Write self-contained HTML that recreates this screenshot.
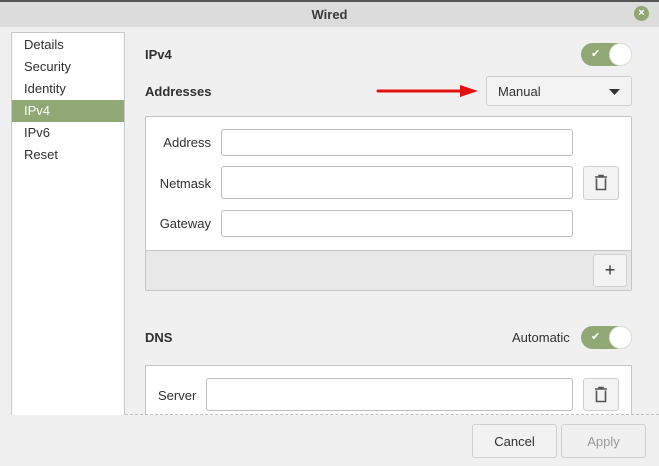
<!DOCTYPE html>
<html><head><meta charset="utf-8"><style>
*{box-sizing:border-box;margin:0;padding:0}
body{width:659px;height:466px;overflow:hidden;background:#f0f0f0;font-family:"Liberation Sans","DejaVu Sans",sans-serif;font-size:13px;color:#303030;position:relative}
.a{position:absolute}
.title{left:0;top:0;width:659px;height:27px;background:#dcdcdc;border-top:2px solid #555;text-align:center;line-height:26px;font-weight:bold;color:#3a3a3a}
.list{left:11px;top:32px;width:114px;height:384px;background:#fff;border:1px solid #c8c8c8;border-bottom:none;padding-top:1px}
.list div{height:22px;line-height:22px;padding-left:12px}
.list .sel{background:#8fa876;color:#fff}
.b{font-weight:bold}
.tog{width:51px;height:23px;border-radius:12px;background:#8fa876}
.tog .k{position:absolute;right:0px;top:0px;width:23px;height:23px;border-radius:50%;background:#fff;border:1px solid #dfe6d6}
.tog .c{position:absolute;left:10px;top:4px;color:#fff;font-size:11px}
.inp{background:#fff;border:1px solid #bdbdbd;border-radius:3px}
.btn{background:#f3f3f3;border:1px solid #cfcfcf;border-radius:3px;text-align:center}
.lbl{text-align:right;width:70px}
</style></head><body>
<div class="a title">Wired</div>
<div class="a" style="left:634px;top:6px;width:15px;height:15px;border-radius:50%;background:#8fa876;color:#fff;font-size:11px;line-height:15px;text-align:center;font-weight:bold">×</div>
<div class="a list"><div>Details</div><div>Security</div><div>Identity</div><div class="sel">IPv4</div><div>IPv6</div><div>Reset</div></div>
<div class="a b" style="left:145px;top:47px">IPv4</div>
<div class="a tog" style="left:581px;top:43px"><span class="c">✔</span><span class="k"></span></div>
<div class="a b" style="left:145px;top:84px">Addresses</div>
<svg class="a" style="left:376px;top:83px" width="104" height="16"><line x1="2" y1="8" x2="86" y2="8" stroke="#e31010" stroke-width="3" stroke-linecap="round"/><polygon points="84,2 102,8 84,14" fill="#e31010"/></svg>
<div class="a btn" style="left:486px;top:76px;width:146px;height:30px;text-align:left;padding-left:11px;line-height:29px">Manual<svg class="a" style="right:11px;top:12px" width="11" height="6"><polygon points="0,0 11,0 5.5,6" fill="#333"/></svg></div>
<div class="a" style="left:145px;top:116px;width:487px;height:175px;background:#fff;border:1px solid #c4c4c4;border-radius:2px;overflow:hidden">
 <div class="a" style="left:0;top:133px;width:487px;height:42px;background:#e8e8e8;border-top:1px solid #c4c4c4"></div>
</div>
<div class="a lbl" style="left:141px;top:135px">Address</div>
<div class="a inp" style="left:221px;top:129px;width:352px;height:27px"></div>
<div class="a lbl" style="left:141px;top:176px">Netmask</div>
<div class="a inp" style="left:221px;top:166px;width:352px;height:33px"></div>
<div class="a lbl" style="left:141px;top:216px">Gateway</div>
<div class="a inp" style="left:221px;top:210px;width:352px;height:27px"></div>
<div class="a btn" style="left:583px;top:166px;width:36px;height:34px"><svg width="34" height="32"><path d="M11 10h12M15 10V8.5h4V10M12.5 11.5v11h9v-11" fill="none" stroke="#555" stroke-width="1.6"/></svg></div>
<div class="a btn" style="left:593px;top:254px;width:34px;height:33px;font-size:18px;line-height:30px;color:#333">+</div>
<div class="a b" style="left:145px;top:330px">DNS</div>
<div class="a" style="left:512px;top:330px">Automatic</div>
<div class="a tog" style="left:581px;top:326px"><span class="c">✔</span><span class="k"></span></div>
<div class="a" style="left:145px;top:365px;width:487px;height:51px;background:#fff;border:1px solid #c4c4c4;border-bottom:none"></div>
<div class="a" style="left:158px;top:388px">Server</div>
<div class="a inp" style="left:206px;top:378px;width:367px;height:33px"></div>
<div class="a btn" style="left:583px;top:378px;width:36px;height:33px"><svg width="34" height="32"><path d="M11 10h12M15 10V8.5h4V10M12.5 11.5v11h9v-11" fill="none" stroke="#555" stroke-width="1.6"/></svg></div>
<div class="a" style="left:0;top:415px;width:659px;height:51px;background:#f0f0f0"></div>
<div class="a" style="left:125px;top:414px;width:534px;border-top:1px dashed #c0c0c0"></div>
<div class="a btn" style="left:472px;top:424px;width:85px;height:34px;line-height:33px;background:#f2f2f2">Cancel</div>
<div class="a btn" style="left:561px;top:424px;width:85px;height:34px;line-height:33px;color:#999;background:#f0f0f0">Apply</div>
</body></html>
